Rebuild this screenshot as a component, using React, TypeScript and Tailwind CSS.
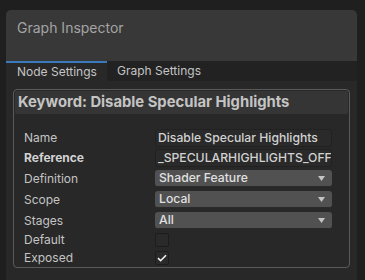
import { ReactNode } from "react";

function Row({ label, bold, h, children }: { label: string; bold?: boolean; h: string; children: ReactNode }) {
  return (
    <div className={`flex items-center ${h}`}>
      <div className={`w-[131px] shrink-0 text-[12px] ${bold ? "font-bold text-[#d2d2d2]" : "text-[#c4c4c4]"}`}>{label}</div>
      {children}
    </div>
  );
}

function TextField({ value }: { value: string }) {
  return (
    <div className="flex h-[18px] w-[177px] items-center overflow-hidden whitespace-nowrap rounded-[3px] border border-[#212121] bg-[#2a2a2a] pl-[2px] text-[12.2px] font-medium text-[#d2d2d2]">
      {value}
    </div>
  );
}

function Dropdown({ value }: { value: string }) {
  return (
    <div className="flex h-[17px] w-[177px] items-center justify-between rounded-[3px] border-b border-[#2a2a2a] bg-[#515151] pl-[4px] pr-[7px] text-[12.2px] font-medium text-[#e0e0e0]">
      <span>{value}</span>
      <svg width="7" height="5" viewBox="0 0 7 5">
        <path d="M0 0h7L3.5 5z" fill="#c4c4c4" />
      </svg>
    </div>
  );
}

function Checkbox({ checked }: { checked?: boolean }) {
  return (
    <div className="flex h-[14px] w-[14px] items-center justify-center rounded-[2px] border border-[#1c1c1c] bg-[#2a2a2a]">
      {checked && (
        <svg width="10" height="8" viewBox="0 0 10 8">
          <path d="M1 4.2l2.6 2.5L9 1.2" stroke="#f0f0f0" strokeWidth="1.6" fill="none" />
        </svg>
      )}
    </div>
  );
}

export default function App() {
  return (
    <div className="h-[280px] w-[365px] overflow-hidden bg-[#1f1f1f] pl-[6px] pr-[8px] pt-[10px] font-['Inter',sans-serif]">
      <div className="flex h-full flex-col overflow-hidden rounded-t-[5px]">
        <div className="h-[51px] shrink-0 bg-[#383838] pl-[11px] pt-[9px] text-[14px] leading-[18px] text-[#a4a4a4]">
          Graph Inspector
        </div>
        <div className="flex h-[20px] shrink-0 bg-[#222222] text-[12px] text-[#c4c4c4]">
          <div className="flex w-[101px] items-center border-t-2 border-[#3a79bb] bg-[#282828] pl-[11px]">Node Settings</div>
          <div className="flex items-center pl-[10px]">Graph Settings</div>
        </div>
        <div className="flex-1 bg-[#282828] px-[7px] pt-[8px]">
          <div className="rounded-[4px] border border-[#5a5a5a] px-[1px] pt-[1px]">
            <div className="flex h-[23px] items-center rounded-[2px] bg-[#353535] pl-[3px] text-[14.8px] font-bold text-[#c4c4c4]">
              Keyword: Disable Specular Highlights
            </div>
            <div className="pl-[9px] pt-[14px]">
              <Row label="Name" h="h-[20px]">
                <TextField value="Disable Specular Highlights" />
              </Row>
              <Row label="Reference" bold h="h-[20px]">
                <TextField value="_SPECULARHIGHLIGHTS_OFF" />
              </Row>
              <Row label="Definition" h="h-[21px]">
                <Dropdown value="Shader Feature" />
              </Row>
              <Row label="Scope" h="h-[21px]">
                <Dropdown value="Local" />
              </Row>
              <Row label="Stages" h="h-[21px]">
                <Dropdown value="All" />
              </Row>
              <Row label="Default" h="h-[18px]">
                <Checkbox />
              </Row>
              <Row label="Exposed" h="h-[18px]">
                <Checkbox checked />
              </Row>
            </div>
          </div>
        </div>
      </div>
    </div>
  );
}
